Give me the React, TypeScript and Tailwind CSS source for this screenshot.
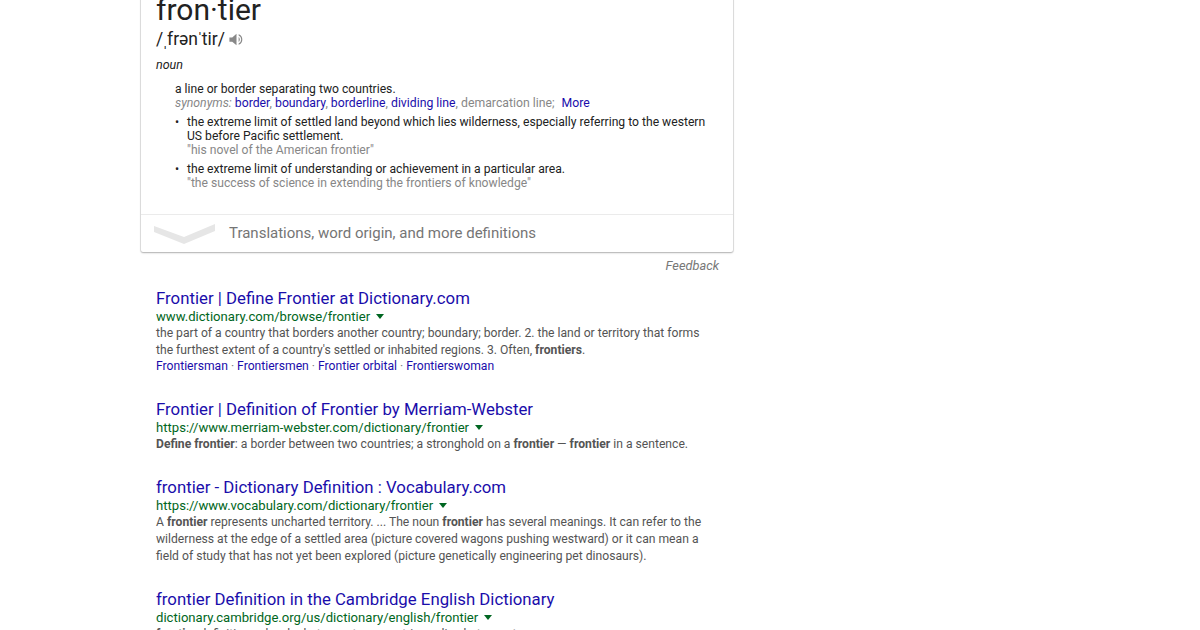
const blue = 'text-[#1a0dab]';
const green = 'text-[#006621]';

function Caret() {
  return <span className="ml-[6px] inline-block align-[2px] border-x-[4px] border-t-[5px] border-x-transparent border-t-[#006621]" />;
}

function Result({ title, url, children }: { title: string; url: string; children?: React.ReactNode }) {
  return (
    <div>
      <div className={`text-[16.8px] leading-[21px] ${blue}`}>{title}</div>
      <div className={`text-[13.1px] leading-[16px] ${green}`}>
        {url}
        <Caret />
      </div>
      <div className="text-[12.15px] leading-[17px] text-[#545454]">{children}</div>
    </div>
  );
}

export default function App() {
  return (
    <div className="h-[630px] w-[1200px] overflow-hidden bg-white font-['Roboto',sans-serif] text-[#222]">
      <div className="-mt-[10px] ml-[141px] h-[262px] w-[592px] rounded-b-[2px] bg-white shadow-[0_1px_2px_rgba(0,0,0,0.25),0_0_0_1px_rgba(0,0,0,0.08)]">
        <div className="h-[224px] px-[15px]">
          <div className="text-[30px] leading-[40px] text-[#222]">fron·tier</div>
          <div className="flex items-center text-[17.5px] leading-[18px] text-[#222]">
            <span>
              /<span className="-mx-[1px]">ˌ</span>frən<span className="-mx-[1px]">ˈ</span>tir/
            </span>
            <svg className="ml-[3px] mt-[1px]" width="17" height="17" viewBox="0 0 24 24" fill="#888">
              <path d="M2 9v6h4l6 5V4L6 9H2z" />
              <path d="M15 8.5a4.5 4.5 0 0 1 0 7v-7z" />
              <path d="M15 4.5v2a6 6 0 0 1 0 11v2a8 8 0 0 0 0-15z" />
            </svg>
          </div>
          <div className="mt-[8px] text-[12.5px] italic leading-[17px]">noun</div>
          <div className="mt-[9px] pl-[19px] text-[12.15px] leading-[14px]">
            <div>a line or border separating two countries.</div>
            <div className="text-[12.25px] text-[#878787]">
              <i>synonyms:</i> <span className={blue}>border</span>, <span className={blue}>boundary</span>,{' '}
              <span className={blue}>borderline</span>, <span className={blue}>dividing line</span>, demarcation line;
              <span className={`ml-[7px] ${blue}`}>More</span>
            </div>
          </div>
          <ul className="mt-[5px] pl-[19px] text-[12.15px] leading-[14px]">
            <li className="relative w-[540px] pl-[12px]">
              <span className="absolute left-0 top-0">•</span>
              the extreme limit of settled land beyond which lies wilderness, especially referring to the western US before Pacific settlement.
              <div className="text-[#878787]">"his novel of the American frontier"</div>
            </li>
            <li className="relative mt-[5px] pl-[12px]">
              <span className="absolute left-0 top-0">•</span>
              the extreme limit of understanding or achievement in a particular area.
              <div className="text-[#878787]">"the success of science in extending the frontiers of knowledge"</div>
            </li>
          </ul>
        </div>
        <div className="flex h-[38px] items-center border-t border-[#ebebeb] pl-[13px]">
          <svg width="62" height="20" viewBox="0 0 62 20" fill="#e6e6e6">
            <path d="M0 2 L30 13 L61 0 L61 7 L30 20 L0 8 Z" />
          </svg>
          <span className="ml-[13px] text-[15px] text-[#757575]">Translations, word origin, and more definitions</span>
        </div>
      </div>
      <div className="ml-[141px] mt-[6px] w-[578px] text-right text-[12.8px] italic leading-[16px] text-[#777]">Feedback</div>
      <div className="ml-[156px] mt-[14px] flex w-[560px] flex-col gap-[24px]">
        <Result title="Frontier | Define Frontier at Dictionary.com" url="www.dictionary.com/browse/frontier">
          the part of a country that borders another country; boundary; border. 2. the land or territory that forms the furthest extent of a country's settled or inhabited regions. 3. Often, <b>frontiers</b>.
          <div className={`-mt-[1px] ${blue}`}>
            Frontiersman <span className="text-[#808080]">·</span> Frontiersmen <span className="text-[#808080]">·</span> Frontier orbital <span className="text-[#808080]">·</span> Frontierswoman
          </div>
        </Result>
        <Result title="Frontier | Definition of Frontier by Merriam-Webster" url="https://www.merriam-webster.com/dictionary/frontier">
          <b>Define frontier</b>: a border between two countries; a stronghold on a <b>frontier</b> — <b>frontier</b> in a sentence.
        </Result>
        <Result title="frontier - Dictionary Definition : Vocabulary.com" url="https://www.vocabulary.com/dictionary/frontier">
          A <b>frontier</b> represents uncharted territory. ... The noun <b>frontier</b> has several meanings. It can refer to the wilderness at the edge of a settled area (picture covered wagons pushing westward) or it can mean a field of study that has not yet been explored (picture genetically engineering pet dinosaurs).
        </Result>
        <Result title="frontier Definition in the Cambridge English Dictionary" url="dictionary.cambridge.org/us/dictionary/english/frontier">
          <b>frontier</b> definition: a border between two countries: a line between two areas.
        </Result>
      </div>
    </div>
  );
}
